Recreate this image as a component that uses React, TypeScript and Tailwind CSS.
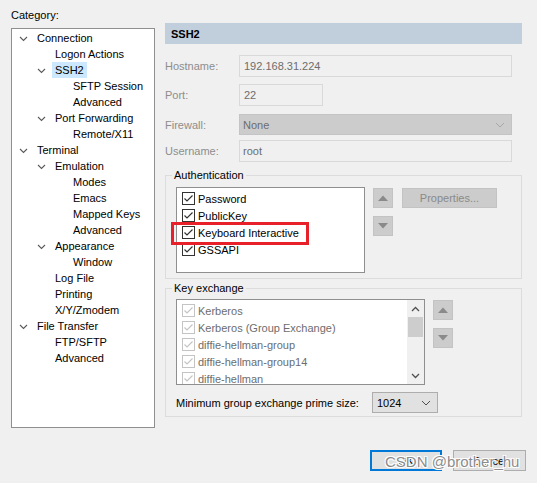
import React from "react";

type TreeItem = { label: string; level: number; expanded?: boolean; selected?: boolean };

const tree: TreeItem[] = [
  { label: "Connection", level: 0, expanded: true },
  { label: "Logon Actions", level: 1 },
  { label: "SSH2", level: 1, expanded: true, selected: true },
  { label: "SFTP Session", level: 2 },
  { label: "Advanced", level: 2 },
  { label: "Port Forwarding", level: 1, expanded: true },
  { label: "Remote/X11", level: 2 },
  { label: "Terminal", level: 0, expanded: true },
  { label: "Emulation", level: 1, expanded: true },
  { label: "Modes", level: 2 },
  { label: "Emacs", level: 2 },
  { label: "Mapped Keys", level: 2 },
  { label: "Advanced", level: 2 },
  { label: "Appearance", level: 1, expanded: true },
  { label: "Window", level: 2 },
  { label: "Log File", level: 1 },
  { label: "Printing", level: 1 },
  { label: "X/Y/Zmodem", level: 1 },
  { label: "File Transfer", level: 0, expanded: true },
  { label: "FTP/SFTP", level: 1 },
  { label: "Advanced", level: 1 },
];

const Chevron = () => (
  <svg width="9" height="6" viewBox="0 0 9 6" className="block">
    <polyline points="1,1 4.5,4.5 8,1" fill="none" stroke="#5a5a5a" strokeWidth="1.1" />
  </svg>
);

const Check = ({ disabled }: { disabled?: boolean }) => {
  const c = disabled ? "#c4c4c4" : "#333333";
  return (
    <svg width="13" height="13" viewBox="0 0 13 13" className="block shrink-0">
      <rect x="0.5" y="0.5" width="12" height="12" fill="#ffffff" stroke={c} strokeWidth="1" />
      <polyline points="2.5,6.5 5,9 10.5,3.5" fill="none" stroke={c} strokeWidth="1.2" />
    </svg>
  );
};

const ArrowBtn = ({ up }: { up?: boolean }) => (
  <div className="w-[20px] h-[20px] bg-[#cccccc] border border-[#c3c3c3] flex items-center justify-center">
    <svg width="10" height="6" viewBox="0 0 10 6" className="block">
      {up ? <polygon points="0,6 5,0.5 10,6" fill="#8a8a8a" /> : <polygon points="0,0 10,0 5,5.5" fill="#8a8a8a" />}
    </svg>
  </div>
);

const SelChevron = ({ color = "#6d6d6d" }: { color?: string }) => (
  <svg width="10" height="6" viewBox="0 0 10 6" className="block">
    <polyline points="1,1 5,5 9,1" fill="none" stroke={color} strokeWidth="1" />
  </svg>
);

function FieldRow({ label, children, mt }: { label: string; children: React.ReactNode; mt: string }) {
  return (
    <div className={`flex items-center ${mt}`}>
      <div className="w-[74px] text-[#8d8d8d]">{label}</div>
      {children}
    </div>
  );
}

export default function App() {
  const auth = ["Password", "PublicKey", "Keyboard Interactive", "GSSAPI"];
  const kex = ["Kerberos", "Kerberos (Group Exchange)", "diffie-hellman-group", "diffie-hellman-group14", "diffie-hellman"];
  return (
    <div
      className="relative w-[537px] h-[483px] bg-[#f0f0f0] text-[11px] leading-[14px] text-black overflow-hidden"
      style={{ fontFamily: '"Liberation Sans", Arial, sans-serif' }}
    >
      <div className="flex">
        {/* Left column */}
        <div className="pl-[11px] pt-[8px] w-[155px] shrink-0">
          <div>Category:</div>
          <div className="mt-[6px] h-[400px] w-[144px] bg-white border border-[#8f8f8f] pt-[1px]">
            {tree.map((t, i) => (
              <div key={i} className="h-[16px] flex items-center relative" style={{ paddingLeft: 25 + t.level * 18 }}>
                {t.expanded && (
                  <div className="absolute top-[6px]" style={{ left: 7 + t.level * 18 }}>
                    <Chevron />
                  </div>
                )}
                <span className={t.selected ? "bg-[#cce8ff] -ml-[3px] px-[3px] h-[16px] flex items-center" : ""}>{t.label}</span>
              </div>
            ))}
          </div>
        </div>

        {/* Right column */}
        <div className="ml-[10px] pt-[23px] w-[357px] shrink-0">
          <div className="h-[21px] bg-[#c1cedb] flex items-center pl-[6px] font-bold">SSH2</div>

          <FieldRow label="Hostname:" mt="mt-[11px]">
            <div className="w-[273px] h-[22px] border border-[#d9d9d9] flex items-center pl-[4px] text-[#6d6d6d]">192.168.31.224</div>
          </FieldRow>
          <FieldRow label="Port:" mt="mt-[7px]">
            <div className="w-[84px] h-[22px] border border-[#d9d9d9] flex items-center pl-[4px] text-[#6d6d6d]">22</div>
          </FieldRow>
          <FieldRow label="Firewall:" mt="mt-[8px]">
            <div className="w-[273px] h-[21px] border border-[#c4c4c4] bg-[#cccccc] flex items-center justify-between pl-[3px] pr-[6px] text-[#6d6d6d]">
              <span>None</span>
              <SelChevron color="#a8a8a8" />
            </div>
          </FieldRow>
          <FieldRow label="Username:" mt="mt-[5px]">
            <div className="w-[273px] h-[22px] border border-[#d9d9d9] flex items-center pl-[3px] text-[#6d6d6d]">root</div>
          </FieldRow>

          {/* Authentication group */}
          <div className="relative mt-[13px] w-[357px] h-[104px] border border-[#dcdcdc]">
            <div className="absolute -top-[8px] left-[6px] px-[2px] bg-[#f0f0f0]">Authentication</div>
            <div className="flex pt-[11px] pl-[10px]">
              <div className="w-[189px] h-[86px] bg-white border border-[#8f8f8f] pt-[2px]">
                {auth.map((a) => (
                  <div key={a} className="h-[17px] flex items-center pl-[5px] gap-[3px]">
                    <Check />
                    <span>{a}</span>
                  </div>
                ))}
              </div>
              <div className="ml-[8px] pt-[1px] flex flex-col gap-[8px]">
                <ArrowBtn up />
                <ArrowBtn />
              </div>
              <div className="ml-[9px] pt-[1px]">
                <div className="w-[95px] h-[20px] bg-[#cccccc] border border-[#c3c3c3] flex items-center justify-center text-[#8a8a8a]">
                  Properties...
                </div>
              </div>
            </div>
            <div className="absolute left-[5px] top-[46px] w-[138px] h-[23px] border-[3px] border-[#e8202a]" />
          </div>

          {/* Key exchange group */}
          <div className="relative mt-[9px] w-[357px] h-[129px] border border-[#dcdcdc]">
            <div className="absolute -top-[8px] left-[6px] px-[2px] bg-[#f0f0f0]">Key exchange</div>
            <div className="flex pt-[10px] pl-[10px]">
              <div className="relative w-[249px] h-[86px] bg-white border border-[#8f8f8f] pt-[2px] overflow-hidden">
                {kex.map((k) => (
                  <div key={k} className="h-[17px] flex items-center pl-[5px] gap-[3px] text-[#6d6d6d]">
                    <Check disabled />
                    <span>{k}</span>
                  </div>
                ))}
                <div className="absolute right-0 top-0 bottom-0 w-[17px] bg-[#f0f0f0] flex flex-col items-center">
                  <div className="h-[17px] flex items-center justify-center">
                    <svg width="9" height="6" viewBox="0 0 9 6" className="block">
                      <polyline points="1,5 4.5,1.5 8,5" fill="none" stroke="#505050" strokeWidth="1.3" />
                    </svg>
                  </div>
                  <div className="w-[15px] h-[20px] bg-[#cdcdcd]" />
                  <div className="flex-1" />
                  <div className="h-[17px] flex items-center justify-center">
                    <svg width="9" height="6" viewBox="0 0 9 6" className="block">
                      <polyline points="1,1 4.5,4.5 8,1" fill="none" stroke="#505050" strokeWidth="1.3" />
                    </svg>
                  </div>
                </div>
              </div>
              <div className="ml-[8px] pt-[1px] flex flex-col gap-[8px]">
                <ArrowBtn up />
                <ArrowBtn />
              </div>
            </div>
            <div className="flex items-center pl-[10px] mt-[7px]">
              <div className="w-[196px]">Minimum group exchange prime size:</div>
              <div className="w-[66px] h-[21px] bg-[#e1e1e1] border border-[#adadad] flex items-center justify-between pl-[4px] pr-[6px]">
                <span>1024</span>
                <SelChevron color="#505050" />
              </div>
            </div>
          </div>
        </div>
      </div>

      {/* Buttons */}
      <div className="flex justify-end pr-[11px] mt-[22px] gap-[11px]">
        <div className="w-[72px] h-[21px] bg-[#e1e1e1] border-2 border-[#0078d7] flex items-center justify-center">OK</div>
        <div className="w-[73px] h-[21px] bg-[#e1e1e1] border border-[#adadad] flex items-center justify-center">Cancel</div>
      </div>

      {/* Watermark */}
      <div
        className="absolute left-[385px] top-[453px] text-[15px] leading-[18px] text-[#8c8c8c] whitespace-nowrap pointer-events-none"
        style={{ textShadow: "0 0 1px #fff, 1px 1px 0 #fff, -1px -1px 0 #fff, 1px -1px 0 #fff, -1px 1px 0 #fff" }}
      >
        CSDN @brother_hu
      </div>
    </div>
  );
}
